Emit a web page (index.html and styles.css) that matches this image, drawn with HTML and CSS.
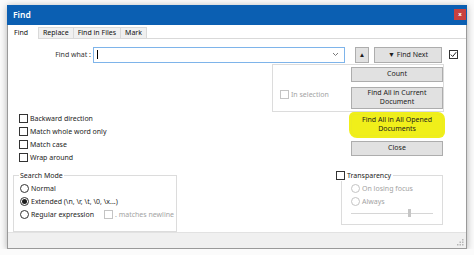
FILE: index.html
```html
<!DOCTYPE html>
<html lang="en">
<head>
  <meta charset="UTF-8">
  <title>Find</title>
  <link rel="stylesheet" href="styles.css">
</head>
<body>
  <div class="window">
    <div class="titlebar">
      <span class="title">Find</span>
      <span class="close">x</span>
    </div>
    <div class="tabs">
      <div class="tab active">Find</div>
      <div class="tab">Replace</div>
      <div class="tab">Find in Files</div>
      <div class="tab">Mark</div>
      <div class="tab-fill"></div>
    </div>
    <div class="page">
      <div class="find-row">
        <label class="find-label">Find what :</label>
        <div class="combo">
          <span class="caret"></span>
          <svg class="chevron" width="7" height="5" viewBox="0 0 7 5"><path d="M1 1l2.5 2.5L6 1" fill="none" stroke="#7a7a7a" stroke-width="1"/></svg>
        </div>
        <button class="btn btn-up">&#9650;</button>
        <button class="btn btn-next">&#9660; Find Next</button>
        <span class="check on">
          <svg width="7" height="7" viewBox="0 0 7 7"><path d="M0.8 3.6l1.9 1.9L6.2 1.2" fill="none" stroke="#222" stroke-width="1"/></svg>
        </span>
      </div>
      <div class="main">
        <div class="left">
          <div class="options">
            <div class="opt"><span class="check"></span>Backward direction</div>
            <div class="opt"><span class="check"></span>Match whole word only</div>
            <div class="opt"><span class="check"></span>Match case</div>
            <div class="opt"><span class="check"></span>Wrap around</div>
          </div>
          <fieldset class="group search-mode">
            <legend>Search Mode</legend>
            <div class="opt"><span class="radio"></span>Normal</div>
            <div class="opt"><span class="radio on"></span>Extended (\n, \r, \t, \0, \x...)</div>
            <div class="opt">
              <span class="radio"></span>Regular expression
              <span class="sub disabled"><span class="check"></span>. matches newline</span>
            </div>
          </fieldset>
        </div>
        <div class="right">
          <div class="panel">
            <div class="opt disabled selection"><span class="check"></span>In selection</div>
            <div class="btn-col">
              <button class="btn">Count</button>
              <button class="btn tall">Find All in Current<br>Document</button>
            </div>
          </div>
          <div class="btn-col outside">
            <button class="btn tall marked">Find All in All Opened<br>Documents</button>
            <button class="btn">Close</button>
          </div>
          <fieldset class="group transparency">
            <legend><span class="check"></span>Transparency</legend>
            <div class="opt disabled"><span class="radio"></span>On losing focus</div>
            <div class="opt disabled"><span class="radio"></span>Always</div>
            <div class="slider"><span class="thumb"></span></div>
          </fieldset>
        </div>
      </div>
    </div>
    <div class="statusbar">
      <svg class="grip" width="7" height="7" viewBox="0 0 7 7" fill="#b5b5b5">
        <rect x="5" y="0" width="1.5" height="1.5"/>
        <rect x="2.5" y="2.5" width="1.5" height="1.5"/>
        <rect x="5" y="2.5" width="1.5" height="1.5"/>
        <rect x="0" y="5" width="1.5" height="1.5"/>
        <rect x="2.5" y="5" width="1.5" height="1.5"/>
        <rect x="5" y="5" width="1.5" height="1.5"/>
      </svg>
    </div>
  </div>
</body>
</html>
```

FILE: styles.css
```css
body {
  margin: 0;
  background: #fbfbfb;
  font-family: "Noto Sans", sans-serif;
  font-size: 7px;
  color: #1c1c1c;
}
.window {
  box-sizing: border-box;
  margin: 5px 0 0 7px;
  width: 460px;
  height: 244px;
  display: flex;
  flex-direction: column;
  background: #fff;
  border: 1px solid #9a9a9a;
  border-top: none;
  box-shadow: 0 1px 7px rgba(0, 0, 0, 0.3);
}
.titlebar {
  height: 21px;
  margin: 0 -1px;
  background: #0b5fb2;
  display: flex;
  align-items: center;
  justify-content: space-between;
  padding: 0 1px 0 6px;
}
.title {
  color: #fff;
  font-weight: 600;
  font-size: 8.5px;
}
.close {
  width: 12px;
  height: 11px;
  background: #c8413f;
  color: #fff;
  font-size: 6px;
  line-height: 10px;
  text-align: center;
  font-weight: bold;
}
.tabs {
  height: 14px;
  display: flex;
  align-items: flex-end;
  white-space: nowrap;
}
.tab {
  box-sizing: border-box;
  height: 12px;
  padding: 0 4px;
  background: #f0f0f0;
  border: 1px solid #d9d9d9;
  margin-left: -1px;
  line-height: 10px;
  color: #111;
}
.tab.active {
  height: 14px;
  width: 31px;
  margin-left: 0;
  background: #fff;
  border-color: #fff;
  border-bottom: none;
  padding-left: 5px;
  line-height: 13px;
}
.tab-fill {
  flex: 1;
  border-bottom: 1px solid #d9d9d9;
}
.page {
  flex: 1;
  padding: 8px 0 0 5px;
  white-space: nowrap;
}
.find-row {
  display: flex;
  align-items: center;
  height: 16px;
}
.find-label {
  width: 78px;
  text-align: right;
  margin-right: 2px;
  color: #333;
}
.combo {
  box-sizing: border-box;
  width: 252px;
  height: 16px;
  border: 1px solid #7eb4ea;
  display: flex;
  align-items: center;
  justify-content: space-between;
  padding: 0 5px 0 3px;
  margin-right: 10px;
}
.caret {
  width: 1px;
  height: 9px;
  background: #000;
}
.btn {
  box-sizing: border-box;
  font: inherit;
  color: #1c1c1c;
  background: #e1e1e1;
  border: 1px solid #adadad;
  padding: 0;
  height: 15px;
  width: 92px;
  line-height: 1.2;
}
.btn-up {
  width: 14px;
  height: 16px;
  font-size: 6.5px;
  margin-right: 5px;
}
.btn-next {
  width: 68px;
  height: 16px;
  margin-right: 7px;
}
.check {
  box-sizing: border-box;
  display: inline-flex;
  align-items: center;
  justify-content: center;
  width: 9px;
  height: 9px;
  border: 1px solid #333;
  background: #fff;
  flex: none;
}
.radio {
  box-sizing: border-box;
  display: inline-flex;
  align-items: center;
  justify-content: center;
  width: 9px;
  height: 9px;
  border: 1px solid #333;
  border-radius: 50%;
  background: #fff;
  flex: none;
}
.radio.on::after {
  content: "";
  width: 5px;
  height: 5px;
  border-radius: 50%;
  background: #1c1c1c;
}
.disabled {
  color: #a3a3a3;
}
.disabled .check,
.disabled .radio {
  border-color: #c4c4c4;
}
.main {
  display: flex;
}
.left {
  width: 164px;
}
.options {
  padding: 49px 0 0 6px;
}
.opt {
  display: flex;
  align-items: center;
  height: 13px;
  gap: 2px;
}
.group {
  margin: 0;
  min-width: 0;
  border: 1px solid #dcdcdc;
}
.search-mode {
  margin-top: 7px;
  padding: 1px 0 10px 6px;
}
.search-mode legend {
  padding: 0 1px;
  margin-left: -1px;
  line-height: 10px;
  color: #222;
}
.sub {
  display: inline-flex;
  align-items: center;
  gap: 2px;
  margin-left: 8px;
}
.right {
  margin-left: 95px;
  width: 172px;
}
.panel {
  box-sizing: border-box;
  margin-top: 1px;
  height: 48px;
  border: 1px solid #dcdcdc;
  display: flex;
  justify-content: space-between;
  padding: 2px 0 2px 7px;
}
.selection {
  margin-top: 21px;
}
.btn-col {
  display: flex;
  flex-direction: column;
  gap: 5px;
}
.btn.tall {
  height: 22px;
}
.outside {
  margin: 2px 0 0 79px;
}
.btn.marked {
  background: #f0ef1a;
  border-color: #ecec20;
  border-radius: 3px 5px 4px 6px;
  box-shadow: 0 0 0 2px #f0ef1a;
}
.transparency {
  margin: 15px 0 0 69px;
  width: 102px;
  box-sizing: border-box;
  height: 54px;
  padding: 1px 0 0 9px;
}
.transparency legend {
  display: flex;
  align-items: center;
  gap: 2px;
  margin-left: -15px;
  padding: 0 2px 0 0;
  line-height: 10px;
  color: #1c1c1c;
}
.slider {
  position: relative;
  width: 82px;
  height: 1px;
  margin-top: 5px;
  background: #d6d6d6;
}
.thumb {
  position: absolute;
  left: 57px;
  top: -4px;
  width: 3px;
  height: 8px;
  background: #c6c6c6;
}
.statusbar {
  height: 14px;
  background: #f0f0f0;
  border-top: 1px solid #e2e2e2;
  display: flex;
  justify-content: flex-end;
  align-items: flex-end;
  padding: 0 2px 2px 0;
}
```
